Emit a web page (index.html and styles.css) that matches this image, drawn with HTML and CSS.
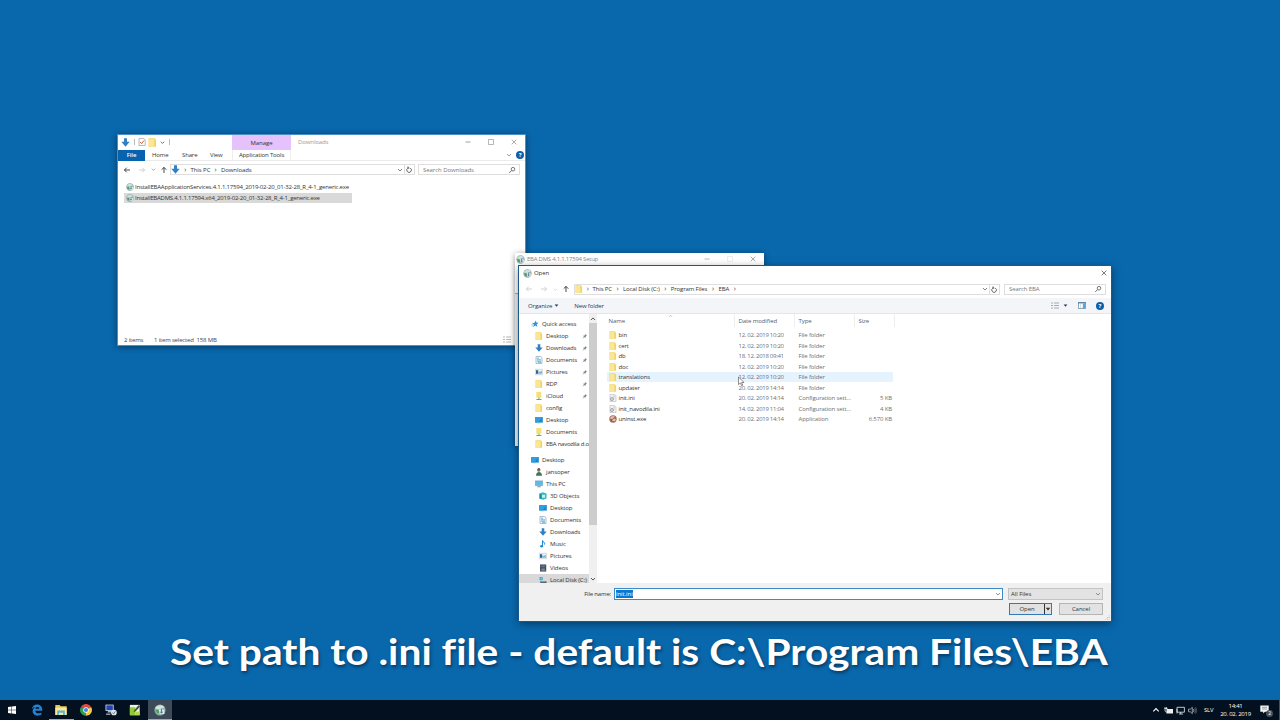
FILE: index.html
```html
<!DOCTYPE html>
<html lang="en">
<head>
  <meta charset="UTF-8">
  <title>Desktop</title>
  <link rel="stylesheet" href="styles.css">
</head>
<body>

<svg class="sprite" width="0" height="0">
  <symbol id="folder" viewBox="0 0 8 8"><path d="M.5.2h5.600v1h1v6.600H.5z" fill="#f0d266"/><path d="M1.200.8h4.300v7H.5z" fill="#fae695"/></symbol>
  <symbol id="folder-sync" viewBox="0 0 8 8"><path d="M1.300 0h5v5.700h-5z" fill="#f6de78"/><path d="M3.400 5.500h1V7h2v.9h-5V7h2z" fill="#5eb546"/></symbol>
  <symbol id="down" viewBox="0 0 8 8"><path d="M2.700.2h2.600v3.200h2.400L4 7.800.3 3.400h2.400z" fill="#2f80c4"/></symbol>
  <symbol id="doc" viewBox="0 0 8 8"><path d="M1 .5h4.700L7 1.800v5.700H1z" fill="#f4fafd" stroke="#7897ac" stroke-width=".6"/><path d="M2 2.200h2M2 3.800h4M2 5.200h4M3 6.300h3" stroke="#3593cf" stroke-width=".7"/></symbol>
  <symbol id="pic" viewBox="0 0 8 8"><path d="M.3 1.300h7.400v5.400H.3z" fill="#eef6f9" stroke="#a9b9c2" stroke-width=".5"/><path d="M1 2.200h2.200v3.600H1z" fill="#2d6791"/><path d="M3.200 4l3.800-1v2.800H3.200z" fill="#85b7cd"/></symbol>
  <symbol id="desk" viewBox="0 0 8 8"><path d="M.2 1h7.600v5.600H.2z" fill="#1889cf"/><path d="M.2 1h7.600L3 6.600H.2z" fill="#2e9fdd"/><path d="M2.500 7h3" stroke="#8fb2c7" stroke-width=".5"/></symbol>
  <symbol id="pc" viewBox="0 0 8 8"><path d="M.2.8h7.600v4.900H.2z" fill="#62b8e8" stroke="#6d92a8" stroke-width=".4"/><path d="M2.800 5.800h2.400l.8 1.500H2z" fill="#8ea5b2"/></symbol>
  <symbol id="user" viewBox="0 0 8 8"><circle cx="3.800" cy="2.200" r="1.500" fill="#9d7353"/><path d="M2.200 2.100C2-.3 5.500-.3 5.400 2 4.200 1.100 3.300 1 2.200 2.100z" fill="#333b32"/><path d="M1 7.700c0-4.800 6-4.800 6 0z" fill="#39795a"/></symbol>
  <symbol id="cube" viewBox="0 0 8 8"><path d="M.5 1.400L3.800.3l3.700 1.100v5.200L4 7.700.5 6.600z" fill="#35b9bf"/><path d="M3 2.700l3 .1v3H3z" fill="#c3f1ef"/><path d="M.5 1.400l2 1v4.800l-2-.6z" fill="#188d9b"/></symbol>
  <symbol id="music" viewBox="0 0 8 8"><path d="M3.500 6.200V.5c.3 1.400 2.800 1.700 2.100 4.100" fill="none" stroke="#218dd1" stroke-width="1"/><ellipse cx="2.600" cy="6.300" rx="1.500" ry="1.200" fill="#218dd1"/></symbol>
  <symbol id="video" viewBox="0 0 8 8"><path d="M1 .5h6.200v7H1z" fill="#303842"/><path d="M2.300 1.200h3.600v2.400H2.300z" fill="#5a7899"/><path d="M2.300 4.300h3.600v2.500H2.300z" fill="#78879a"/><path d="M1.500 1v6.500M6.700 1v6.500" stroke="#ddd" stroke-width=".4" stroke-dasharray=".6 .7"/></symbol>
  <symbol id="disk" viewBox="0 0 8 8"><path d="M.5 1H2v1.500H.5zm1.700 0h1.600v1.500H2.200zM.5 2.700H2v1.500H.5zm1.700 0h1.600v1.500H2.200z" fill="#27b1df"/><path d="M1.500 5.100h5.700l.6 2H1z" fill="#576b75"/><path d="M2 5.500h4.500" stroke="#c3ced2" stroke-width=".5"/></symbol>
  <symbol id="star" viewBox="0 0 8 8"><path d="M4.600.6l.8 2 2.100.2-1.800 1.500.7 2.400-2.100-1.300-2.300 1.500.9-2.400L1 3.100l2.400-.2z" fill="#2d91d4"/><path d="M.3 4.800h1.500M.8 6h1" stroke="#2d91d4" stroke-width=".5"/></symbol>
  <symbol id="pin" viewBox="0 0 8 8"><path d="M4.800 1l2 2-.8.3-1 1.200v1.400L3.800 4.700 1.300 6.900l2-2.900L2.200 3h1.500l1-1z" fill="#7b838a"/></symbol>
  <symbol id="ini" viewBox="0 0 8 8"><path d="M1 .4h4.500L7 1.900v5.700H1z" fill="#f4f4f4" stroke="#a6a6a6" stroke-width=".5"/><path d="M4 2h2M4 3h2M5.300 4.200H6" stroke="#aaa" stroke-width=".4"/><circle cx="3" cy="5" r="1.500" fill="#ddd" stroke="#98a0a8" stroke-width=".9"/></symbol>
  <symbol id="uninst" viewBox="0 0 8 8"><circle cx="4" cy="4" r="3.700" fill="#a8685c"/><path d="M1.300 2.200C3 .5 5 .7 6.200 2L5 4H1.500z" fill="#dfb9aa"/><path d="M3 4h3.500v2H3.400z" fill="#d7c6be"/><path d="M2 6l4-4.200" stroke="#973c32" stroke-width=".7"/></symbol>
  <symbol id="setup" viewBox="0 0 8 8"><circle cx="4" cy="4" r="3.700" fill="#8fafa8"/><path d="M1 2.400C2.600.4 5.600.5 6.800 2.100L4.800 3.600 1 3.400z" fill="#d4e1dd"/><path d="M2.700 3.700h4.200v3H3.300z" fill="#e2eee9"/><path d="M1 3.800h2.200l.5 2.800-1.800-.8z" fill="#4d9b69"/><path d="M4.600 3v2.100h-.9l1.300 1.400 1.300-1.400h-.9V3z" fill="#4b86a1"/></symbol>
  <symbol id="arrow" viewBox="0 0 8 8"><path d="M7 4H1.400M3.700 1.700L1.400 4l2.300 2.300" fill="none" stroke="currentColor" stroke-width=".9"/></symbol>
  <symbol id="chev" viewBox="0 0 8 8"><path d="M1.300 2.700L4 5.400l2.700-2.700" fill="none" stroke="currentColor" stroke-width="1.100"/></symbol>
  <symbol id="refresh" viewBox="0 0 8 8"><path d="M5.300 2.100A2.300 2.300 0 1 1 2.900 2.100M2.100 1.200h1.600v1.700" fill="none" stroke="#555" stroke-width=".9"/></symbol>
  <symbol id="search" viewBox="0 0 8 8"><circle cx="5" cy="3.200" r="1.800" fill="none" stroke="#555" stroke-width=".8"/><path d="M3.600 4.600L1.300 6.900" stroke="#555" stroke-width=".9"/></symbol>
  <symbol id="min" viewBox="0 0 8 8"><path d="M1.500 4h5" stroke="currentColor" stroke-width=".8"/></symbol>
  <symbol id="max" viewBox="0 0 8 8"><path d="M1.500 1.500h5v5h-5z" fill="none" stroke="currentColor" stroke-width=".6"/></symbol>
  <symbol id="close" viewBox="0 0 8 8"><path d="M1.700 1.700l4.600 4.600m0-4.600L1.700 6.300" stroke="currentColor" stroke-width=".7"/></symbol>
  <symbol id="tri" viewBox="0 0 8 8"><path d="M1 2.300h6L4 6z" fill="currentColor"/></symbol>
</svg>

<main class="desktop">

  <section class="window explorer">
    <header class="ex-title">
      <div class="quick">
        <svg class="i9"><use href="#down"/></svg>
        <span class="sep"></span>
        <svg class="i8 check" viewBox="0 0 8 8"><path d="M1 .4h4.800L7.200 2v5.600H1z" fill="#fff" stroke="#888" stroke-width=".6"/><path d="M2.200 4l1.400 1.700L6 2.500" fill="none" stroke="#c2553a" stroke-width=".9"/></svg>
        <svg class="i9"><use href="#folder"/></svg>
        <svg class="i5"><use href="#chev"/></svg>
        <span class="sep"></span>
      </div>
      <div class="manage">Manage</div>
      <div class="ex-name">Downloads</div>
      <div class="controls">
        <svg class="i8"><use href="#min"/></svg>
        <svg class="i8"><use href="#max"/></svg>
        <svg class="i8"><use href="#close"/></svg>
      </div>
    </header>
    <nav class="ribbon">
      <span class="file-tab">File</span>
      <span class="tab home">Home</span>
      <span class="tab share">Share</span>
      <span class="tab view">View</span>
      <span class="tab tools">Application Tools</span>
      <span class="fill"></span>
      <svg class="i6 muted"><use href="#chev"/></svg>
      <span class="help">?</span>
    </nav>
    <div class="ex-address">
      <svg class="i8 back"><use href="#arrow"/></svg>
      <svg class="i8 forward pale"><use href="#arrow"/></svg>
      <svg class="i5 muted recent"><use href="#chev"/></svg>
      <svg class="i8 up"><use href="#arrow"/></svg>
      <div class="path">
        <svg class="i9"><use href="#down"/></svg>
        <i>›</i><span>This PC</span><i>›</i><span>Downloads</span>
        <span class="fill"></span>
        <svg class="i6"><use href="#chev"/></svg>
      </div>
      <div class="reload"><svg class="i8"><use href="#refresh"/></svg></div>
      <div class="search"><span>Search Downloads</span><svg class="i8"><use href="#search"/></svg></div>
    </div>
    <div class="ex-files">
      <div class="ex-file"><svg class="i8"><use href="#setup"/></svg><span class="n1">InstallEBAApplicationServices.4.1.1.17594_2019-02-20_01-32-28_R_4-1_generic.exe</span></div>
      <div class="ex-file selected"><svg class="i8"><use href="#setup"/></svg><span class="n2">InstallEBADMS.4.1.1.17594.x64_2019-02-20_01-32-28_R_4-1_generic.exe</span></div>
    </div>
    <footer class="ex-status">
      <span class="count">2 items</span><span>1 item selected&nbsp; 158 MB</span>
      <span class="fill"></span>
      <svg class="list-icon" viewBox="0 0 9 7"><path d="M0 1h2m1 0h5M0 3.500h2m1 0h5M0 6h2m1 0h5" stroke="#999" stroke-width=".7"/></svg>
    </footer>
  </section>

  <section class="window setup">
    <header class="setup-title">
      <svg class="i9"><use href="#setup"/></svg>
      <span>EBA DMS 4.1.1.17594 Setup</span>
      <div class="controls">
        <svg class="i8 faint"><use href="#min"/></svg>
        <svg class="i8 faintest"><use href="#max"/></svg>
        <svg class="i8"><use href="#close"/></svg>
      </div>
    </header>
    <div class="setup-head"></div>
    <div class="setup-body"></div>
  </section>

  <section class="window dialog">
    <header class="dl-title">
      <svg class="i9"><use href="#setup"/></svg>
      <span>Open</span>
      <svg class="i8 close"><use href="#close"/></svg>
    </header>
    <div class="dl-address">
      <svg class="i8 back pale"><use href="#arrow"/></svg>
      <svg class="i8 forward pale"><use href="#arrow"/></svg>
      <svg class="i5 pale recent"><use href="#chev"/></svg>
      <svg class="i8 up"><use href="#arrow"/></svg>
      <div class="path">
        <svg class="i8"><use href="#folder"/></svg>
        <i>›</i><span>This PC</span><i>›</i><span>Local Disk (C:)</span><i>›</i><span>Program Files</span><i>›</i><span>EBA</span><i>›</i>
        <span class="fill"></span>
        <svg class="i6"><use href="#chev"/></svg>
      </div>
      <div class="reload"><svg class="i8"><use href="#refresh"/></svg></div>
      <div class="search"><span>Search EBA</span><svg class="i8"><use href="#search"/></svg></div>
    </div>
    <div class="toolbar">
      <span class="organize">Organize</span><svg class="i5"><use href="#tri"/></svg>
      <span class="new-folder">New folder</span>
      <span class="fill"></span>
      <svg class="views" viewBox="0 0 9 7"><path d="M0 1h2m1 0h5M0 3.500h2m1 0h5M0 6h2m1 0h5" stroke="#858b91" stroke-width=".7"/></svg>
      <svg class="i5 views-more"><use href="#tri"/></svg>
      <svg class="preview" viewBox="0 0 8 7"><path d="M.4.4h7.200v6.200H.4z" fill="#fff" stroke="#4c7290" stroke-width=".7"/><path d="M0 .9h8" stroke="#4c7290"/><path d="M4.800 1.300h2.700v5H4.800z" fill="#5aa6db"/><path d="M2.600 1v5.500" stroke="#9bb" stroke-width=".5"/></svg>
      <span class="help">?</span>
    </div>
    <div class="dl-main">
      <nav class="tree">
        <div class="node root"><svg class="i8"><use href="#star"/></svg><span>Quick access</span></div>
        <div class="node"><svg class="i8"><use href="#folder"/></svg><span>Desktop</span><svg class="pin"><use href="#pin"/></svg></div>
        <div class="node"><svg class="i8"><use href="#down"/></svg><span>Downloads</span><svg class="pin"><use href="#pin"/></svg></div>
        <div class="node"><svg class="i8"><use href="#doc"/></svg><span>Documents</span><svg class="pin"><use href="#pin"/></svg></div>
        <div class="node"><svg class="i8"><use href="#pic"/></svg><span>Pictures</span><svg class="pin"><use href="#pin"/></svg></div>
        <div class="node"><svg class="i8"><use href="#folder"/></svg><span>RDP</span><svg class="pin"><use href="#pin"/></svg></div>
        <div class="node"><svg class="i8"><use href="#folder-sync"/></svg><span>iCloud</span><svg class="pin"><use href="#pin"/></svg></div>
        <div class="node"><svg class="i8"><use href="#folder"/></svg><span>config</span></div>
        <div class="node"><svg class="i8"><use href="#desk"/></svg><span>Desktop</span></div>
        <div class="node"><svg class="i8"><use href="#folder-sync"/></svg><span>Documents</span></div>
        <div class="node"><svg class="i8"><use href="#folder"/></svg><span class="tight">EBA navodila d.o</span></div>
        <div class="node root group"><svg class="i8"><use href="#desk"/></svg><span>Desktop</span></div>
        <div class="node"><svg class="i8"><use href="#user"/></svg><span>jansoper</span></div>
        <div class="node"><svg class="i8"><use href="#pc"/></svg><span>This PC</span></div>
        <div class="node sub"><svg class="i8"><use href="#cube"/></svg><span>3D Objects</span></div>
        <div class="node sub"><svg class="i8"><use href="#desk"/></svg><span>Desktop</span></div>
        <div class="node sub"><svg class="i8"><use href="#doc"/></svg><span>Documents</span></div>
        <div class="node sub"><svg class="i8"><use href="#down"/></svg><span>Downloads</span></div>
        <div class="node sub"><svg class="i8"><use href="#music"/></svg><span>Music</span></div>
        <div class="node sub"><svg class="i8"><use href="#pic"/></svg><span>Pictures</span></div>
        <div class="node sub"><svg class="i8"><use href="#video"/></svg><span>Videos</span></div>
        <div class="node sub current"><svg class="i8"><use href="#disk"/></svg><span>Local Disk (C:)</span></div>
      </nav>
      <div class="scrollbar">
        <svg class="i6 flip"><use href="#chev"/></svg>
        <div class="thumb"></div>
        <svg class="i6"><use href="#chev"/></svg>
      </div>
      <div class="listing">
        <div class="sort-mark"><svg class="i6 flip muted"><use href="#chev"/></svg></div>
        <div class="row head"><span></span><span>Name</span><span>Date modified</span><span>Type</span><span>Size</span><span></span></div>
        <div class="row"><svg class="i8"><use href="#folder"/></svg><span>bin</span><span>12. 02. 2019 10:20</span><span>File folder</span><span></span></div>
        <div class="row"><svg class="i8"><use href="#folder"/></svg><span>cert</span><span>12. 02. 2019 10:20</span><span>File folder</span><span></span></div>
        <div class="row"><svg class="i8"><use href="#folder"/></svg><span>db</span><span>18. 12. 2018 09:41</span><span>File folder</span><span></span></div>
        <div class="row"><svg class="i8"><use href="#folder"/></svg><span>doc</span><span>12. 02. 2019 10:20</span><span>File folder</span><span></span></div>
        <div class="row hover"><svg class="i8"><use href="#folder"/></svg><span>translations</span><span>12. 02. 2019 10:20</span><span>File folder</span><span></span></div>
        <div class="row"><svg class="i8"><use href="#folder"/></svg><span>updater</span><span>20. 02. 2019 14:14</span><span>File folder</span><span></span></div>
        <div class="row"><svg class="i8"><use href="#ini"/></svg><span>init.ini</span><span>20. 02. 2019 14:14</span><span>Configuration sett...</span><span>5 KB</span></div>
        <div class="row"><svg class="i8"><use href="#ini"/></svg><span>init_navodila.ini</span><span>14. 02. 2019 11:04</span><span>Configuration sett...</span><span>4 KB</span></div>
        <div class="row"><svg class="i8"><use href="#uninst"/></svg><span>uninst.exe</span><span>20. 02. 2019 14:14</span><span>Application</span><span>6.570 KB</span></div>
      </div>
    </div>
    <footer class="dl-footer">
      <div class="name-row">
        <label>File name:</label>
        <div class="name-box"><mark>init.ini</mark><svg class="i6"><use href="#chev"/></svg></div>
        <div class="filter"><span>All Files</span><svg class="i6"><use href="#chev"/></svg></div>
      </div>
      <div class="button-row">
        <div class="btn open"><span>Open</span><svg class="i6"><use href="#tri"/></svg></div>
        <div class="btn cancel">Cancel</div>
      </div>
      <svg class="grip" viewBox="0 0 6 6"><path d="M4.500.5h1v1h-1zm0 2h1v1h-1zm-2 0h1v1h-1zm2 2h1v1h-1zm-2 0h1v1h-1zm-2 0h1v1h-1z" fill="#b5b5b5"/></svg>
    </footer>
  </section>

  <svg class="cursor" viewBox="0 0 7 10"><path d="M.5.5v7.600l1.900-1.700 1.200 2.800 1.200-.5-1.200-2.700h2.500z" fill="#fff" stroke="#444" stroke-width=".6"/></svg>

  <p class="caption">Set path to .ini file - default is C:\Program Files\EBA</p>
</main>

<footer class="taskbar">
  <div class="task"><svg class="win" viewBox="0 0 9 9"><path d="M0 1.200L4 .6v3.600H0zM4.500.5L9 0v4.200H4.500zM0 4.700h4v3.700l-4-.6zM4.500 4.700H9V9l-4.500-.6z" fill="#fff"/></svg></div>
  <div class="task"><svg class="i11" viewBox="0 0 11 11"><path d="M.7 5C1.100 1.900 3 .4 5.600.4c3.200 0 4.800 2.300 4.800 5.700H4c.1 2.500 3.400 3 5.500 1.600v2.200C5.900 11.600 1.500 10.400 1.500 6.700c0-1.800 1-3.200 2.600-4C2.500 2.900 1.400 3.700.7 5zM4.100 4.400h3.500c0-2.200-3-2.300-3.500 0z" fill="#2482d0"/></svg></div>
  <div class="task running"><svg class="i11" viewBox="0 0 11 11"><path d="M.3 1h4l.8 1h5.600v8H.3z" fill="#e9c65c"/><path d="M.3 3.300h10.400V10H.3z" fill="#fae89a"/><path d="M2 6h7v4H7.400V8H3.600v2H2z" fill="#59b6d2"/></svg></div>
  <div class="task"><svg class="i11" viewBox="0 0 11 11"><path d="M5.500 5.500L.8 2.800A5.300 5.300 0 0 1 10.200 2.800z" fill="#dc4c3d"/><path d="M5.500 5.500l4.700-2.700a5.300 5.300 0 0 1-4.700 8z" fill="#f6cc43"/><path d="M5.500 5.500v5.300a5.300 5.300 0 0 1-4.700-8z" fill="#2e9e56"/><circle cx="5.500" cy="5.500" r="2.500" fill="#fff"/><circle cx="5.500" cy="5.500" r="1.900" fill="#4486e4"/></svg></div>
  <div class="task"><svg class="i11" viewBox="0 0 11 11"><path d="M.5.6h7.400v5.700H.5z" fill="#e1e9f5"/><path d="M1.200 1.200h6v4.400h-6z" fill="#2345b3"/><path d="M3 6.300h3l1 1.500H2.200z" fill="#a9bdd4"/><circle cx="8.200" cy="7.800" r="2.600" fill="#dfe7ed"/><path d="M6.700 8l1.300 1 1.500-2.300" fill="none" stroke="#546b82" stroke-width=".8"/><path d="M1 9.300h4" stroke="#c8d1dc"/></svg></div>
  <div class="task"><svg class="i11" viewBox="0 0 11 11"><path d="M.8.8h9v9.500h-9z" fill="#edf4dc"/><path d="M.8 3h5v7.300h-5z" fill="#8fca3b"/><path d="M4 7.500l1-2L8.900 1l1.300 1.200-4 4.500z" fill="#465244"/><path d="M5.800 7h4v3.300h-4z" fill="#b4d944"/></svg></div>
  <div class="task running active"><svg class="i11"><use href="#setup"/></svg></div>
  <span class="fill"></span>
  <div class="tray">
    <svg class="i8 flip"><use href="#chev"/></svg>
    <svg class="i9" viewBox="0 0 9 9"><path d="M2.500 3H9v4.500H2.500z" fill="#eee"/><path d="M.5 2.500h3M1 1v3c0 2 1 2 2 2M2.500 1v2" stroke="#eee" stroke-width=".8" fill="none"/></svg>
    <svg class="i9" viewBox="0 0 9 9"><path d="M1 1.300h7.400v4.900H1zM4.700 6v2M3 8h4M1 3v4.500" stroke="#eee" stroke-width=".8" fill="none"/></svg>
    <svg class="i9" viewBox="0 0 9 9"><path d="M.5 3.200h1.800L4.300 1.300v6.400L2.300 5.800H.5z" stroke="#eee" stroke-width=".6" fill="none"/><path d="M5.400 3.200q1 1.300 0 2.600" stroke="#ddd" stroke-width=".7" fill="none"/><path d="M6.500 2.200q2 2.300 0 4.600M7.600 1.300q2.200 3.200 0 6.400" stroke="#889" stroke-width=".6" fill="none"/></svg>
    <span class="lang">SLV</span>
    <div class="clock"><span>14:41</span><span>20. 02. 2019</span></div>
    <div class="notes"><svg viewBox="0 0 9 9"><path d="M.3.500h8.400v6.200H5L3.200 8.500V6.700H.3z" fill="#f5f5f5"/><path d="M2 2.300h5M2 4h5" stroke="#596370" stroke-width=".6"/></svg><span class="badge">2</span></div>
    <span class="edge"></span>
  </div>
</footer>

</body>
</html>
```

FILE: styles.css
```css
* { box-sizing: border-box; }
body { margin: 0; width: 1280px; height: 720px; overflow: hidden; display: flex; flex-direction: column; font: 6px/8px 'Open Sans', 'Noto Sans', sans-serif; letter-spacing: -.06px; color: #333; white-space: nowrap; }
.sprite { position: absolute; }
.desktop { position: relative; flex: 1; background: #0967ac; }
.window { position: absolute; display: flex; flex-direction: column; background: #fff; }
svg { flex: none; display: block; }
.i5 { width: 5px; height: 5px; }
.i6 { width: 6px; height: 6px; }
.i8 { width: 8px; height: 8px; }
.i9 { width: 9px; height: 9px; }
.i11 { width: 12px; height: 12px; }
.fill { flex: 1; }
.muted { color: #888; }
.pale { color: #ccc; }
.flip { transform: scaleY(-1); }
.forward { transform: scaleX(-1); }
.up { transform: rotate(90deg); }
.help { width: 8px; height: 8px; border-radius: 50%; background: #0c5fa8; color: #fff; text-align: center; font-weight: 700; }

/* file explorer */
.explorer { left: 117px; top: 134px; width: 409px; height: 212px; border: 1px solid #4b8fc4; box-shadow: 0 1px 6px rgba(0,0,0,.4); }
.ex-title { display: flex; height: 15px; align-items: center; }
.quick { display: flex; width: 114px; height: 14px; align-items: center; padding: 0 0 1px 3px; }
.sep { width: 1px; height: 6px; background: #bbb; margin-left: 4px; }
.check { margin-left: 3px; }
.quick .i9 + .i5 { margin-left: 3px; }
.quick .check + .i9 { margin-left: 2px; }
.manage { width: 59px; height: 15px; padding-top: 4px; background: #e5c2fb; text-align: center; }
.ex-name { flex: 1; padding: 0 0 2px 7px; color: #999; letter-spacing: -.1px; }
.controls { display: flex; gap: 15px; color: #888; padding-right: 7px; }
.ex-title .controls { padding-bottom: 2px; }
.ribbon { display: flex; height: 11px; align-items: center; border-bottom: 1px solid #ebebeb; padding-right: 1px; letter-spacing: -.15px; }
.file-tab { width: 27px; height: 11px; line-height: 11px; background: #0863ae; color: #fff; text-align: center; font-weight: 600; }
.tab.home { width: 30px; padding-left: 7px; }
.tab.share { width: 28px; padding-left: 7px; }
.tab.view { width: 29px; padding-left: 7px; }
.tab.tools { width: 59px; height: 10px; line-height: 10px; text-align: center; border: solid #eee; border-width: 0 1px; }
.ribbon .help { margin-left: 4px; }
.ex-address { display: flex; height: 17px; padding: 0 0 0 5px; align-items: center; }
.back { margin-right: 7px; }
.forward { margin-right: 5px; }
.recent { margin-right: 4px; }
.path { display: flex; flex: 1; height: 11px; align-items: center; border: 1px solid #dedede; padding-right: 1px; }
.ex-address .path { margin-left: 2px; flex: 0 0 235px; }
.path i { width: 10.5px; text-align: center; font-style: normal; font-size: 7px; line-height: 8px; }
.path > svg:last-child { color: #666; }
.reload { width: 10px; height: 11px; border: 1px solid #dedede; border-left: 0; padding: 1px 0 0 0; }
.search { display: flex; justify-content: space-between; align-items: center; height: 11px; border: 1px solid #dedede; color: #777; padding: 0 4px; }
.ex-address .search { width: 102px; margin-left: 3px; padding: 0 3px 0 4px; }
.ex-files { flex: 1; padding: 4px 0 0 6px; }
.ex-file { display: flex; align-items: center; gap: 1px; width: 228px; height: 10.5px; padding-left: 2px; }
.ex-file.selected { background: #d9d9d9; }
.n1 { letter-spacing: -.19px; }
.n2 { letter-spacing: -.22px; }
.ex-status { display: flex; height: 12px; align-items: center; padding: 1px 13px 0 6px; color: #445; letter-spacing: -.17px; }
.count { width: 30px; }
.list-icon { width: 9px; height: 7px; }

/* installer behind the dialog */
.setup { left: 515px; top: 253px; width: 249px; height: 193px; box-shadow: 0 1px 6px rgba(0,0,0,.4); }
.setup-title { display: flex; align-items: center; height: 12px; padding-left: 1px; color: #888; letter-spacing: -.24px; }
.setup-title span { flex: 1; padding-left: 2px; }
.faint { color: #aaa; }
.faintest { color: #e3e3e3; }
.setup-head { height: 29px; border-bottom: 1px solid #aaa; }
.setup-body { flex: 1; background: #eee; }

/* open dialog */
.dialog { left: 519px; top: 266px; width: 592px; height: 355px; outline: 1px solid #1b598a; outline-offset: 0; box-shadow: 0 2px 8px rgba(0,0,0,.5); }
.dl-title { display: flex; align-items: center; height: 15px; padding: 0 3px 1px 4px; gap: 2px; }
.close { margin-left: auto; color: #444; }
.dl-address { display: flex; height: 17px; align-items: center; padding: 0 0 1px 6px; }
.dl-address .up { margin-right: 4px; }
.dl-address .path { flex: 0 0 416px; letter-spacing: -.12px; }
.dl-address .path i { width: 11.1px; }
.dl-address .path i:first-of-type { width: 9.5px; }
.dl-address .search { width: 102px; margin-left: 4px; padding: 0 3px 0 4px; letter-spacing: -.12px; }
.toolbar { display: flex; align-items: center; height: 16px; background: #f4f5f8; border-bottom: 1px solid #e5e6e8; padding: 0 7px 0 9px; color: #1e395b; letter-spacing: -.11px; }
.organize { margin-right: 2px; }
.new-folder { margin-left: 15px; }
.views { width: 9px; height: 7px; }
.views-more { margin: 0 10px 0 3px; }
.preview { width: 8px; height: 7px; margin-right: 10px; }
.dl-main { display: flex; height: 269px; }
.tree { width: 70px; padding-top: 4px; overflow: hidden; letter-spacing: -.12px; }
.node { display: flex; align-items: center; height: 12px; gap: 3px; padding-left: 16px; }
.node.root { padding-left: 12px; gap: 3px; }
.node.sub { padding-left: 20px; }
.node.group { margin-top: 4px; }
.node.current { background: #d9d9d9; }
.tight { letter-spacing: -.23px; }
.pin { width: 7px; height: 7px; margin-left: auto; margin-right: 1px; }
.scrollbar { display: flex; flex-direction: column; width: 8px; align-items: center; background: #f0f0f0; padding: 2px 0 1px; }
.thumb { width: 8px; flex: 0 0 202px; margin: 1px 0 auto; background: #cdcdcd; }
.listing { flex: 1; }
.sort-mark { height: 0; padding-left: 71px; }
.sort-mark .i6 { width: 5px; height: 4px; }
.row { display: grid; grid-template-columns: 10px 120.5px 60px 60px 35px; align-items: center; width: 286px; height: 10.48px; margin-left: 10px; padding-left: 1px; letter-spacing: -.13px; }
.row > svg { margin-left: 1px; }
.row span:nth-child(2) { padding-left: .5px; }
.row span:nth-child(n+3) { color: #707070; }
.row span:nth-child(3) { letter-spacing: -.3px; }
.row span:nth-child(4) { letter-spacing: -.13px; }
.row span:nth-child(5) { text-align: right; margin-right: 1.5px; }
.row.head { grid-template-columns: 0 130px 60px 60px 40px 1px; height: 13px; margin-bottom: 3px; }
.row.head span { color: #4c607a; height: 13px; line-height: 14px; letter-spacing: -.09px; text-align: left; }
.row.head span:nth-child(n+3) { border-left: 1px solid #eee; padding-left: 3.5px; margin: 0 0 0 -4px; }
.row.hover { background: #e5f3ff; }
.dl-footer { position: relative; flex: 1; background: #f0f0f0; padding-top: 5px; }
.name-row { display: flex; height: 12px; align-items: center; }
.name-row label { width: 94px; text-align: right; padding-right: 2px; letter-spacing: -.17px; }
.name-box { display: flex; align-items: center; justify-content: space-between; width: 389px; height: 12px; margin-left: 1px; background: #fff; border: 1px solid #3d8ac7; padding: 0 1px; }
.name-box mark { background: #0878d1; color: #fff; }
.name-box svg, .filter svg { color: #777; }
.filter { display: flex; align-items: center; justify-content: space-between; width: 95px; height: 12px; margin-left: 5px; background: #e3e3e3; border: 1px solid #c3c3c3; padding: 0 1px 0 2px; }
.button-row { display: flex; justify-content: flex-end; gap: 7px; margin: 3px 8px 0 0; }
.btn { height: 12px; line-height: 10px; background: #e2e2e2; border: 1px solid #b5b5b5; text-align: center; }
.open { display: flex; align-items: center; width: 43px; border-color: #3179b9; }
.open span { flex: 1; border-right: 1px solid #333; }
.cancel { width: 44px; }
.grip { position: absolute; right: 1px; bottom: 1px; width: 5px; height: 5px; }
.cursor { position: absolute; left: 738px; top: 376px; width: 7px; height: 11px; }
.caption { position: absolute; left: 170px; top: 627px; margin: 0; font: 700 36px/48px Lato, sans-serif; font-variant-ligatures: none; letter-spacing: 0; color: #fff; text-shadow: 1px 2px 3px rgba(0,0,0,.45); transform: scaleX(1.13); transform-origin: 0 0; }

/* taskbar */
.taskbar { display: flex; height: 20px; background: #02101f; color: #fff; }
.task { display: flex; align-items: center; justify-content: center; width: 24.6px; }
.win { width: 8px; height: 8px; }
.running { border-bottom: 1px solid #71b4e6; padding-top: 1px; }
.active { background: #3d4a57; }
.tray { display: flex; align-items: center; gap: 3px; letter-spacing: -.25px; }
.tray > .i8 { margin-right: 1px; }
.lang { margin-left: 4px; width: 11px; }
.clock { display: flex; flex-direction: column; text-align: center; width: 33px; margin-left: 1px; }
.notes { position: relative; width: 13px; height: 10px; margin-left: 5px; }
.notes svg { width: 9px; height: 9px; }
.badge { position: absolute; right: 0; bottom: -2px; width: 7px; height: 7px; border-radius: 50%; background: #46515c; font-size: 5px; line-height: 7px; text-align: center; }
.edge { width: 1px; height: 20px; margin-left: 3px; background: #46505b; }
```
